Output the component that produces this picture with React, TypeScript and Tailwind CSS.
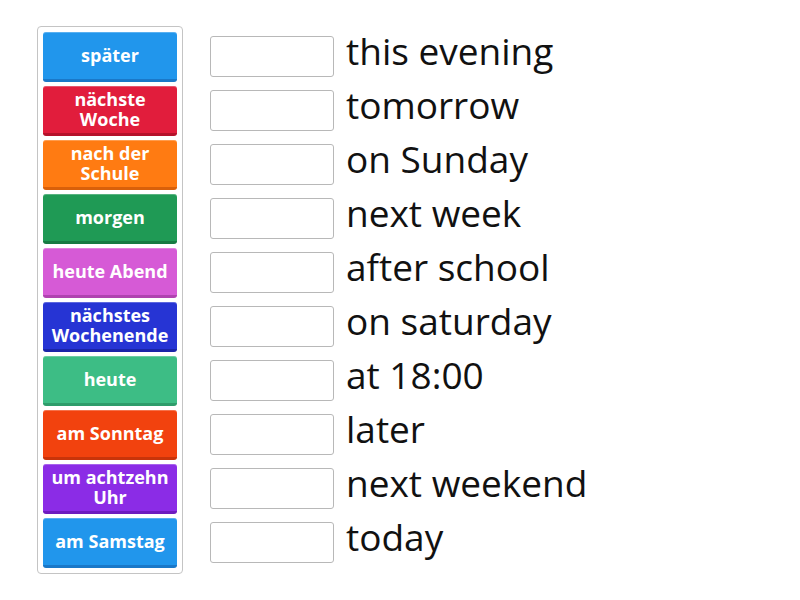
const tiles = [
  { label: "später", bg: "bg-[#2196ec]", edge: "border-[#1a78c8]" },
  { label: "nächste Woche", bg: "bg-[#e11d3c]", edge: "border-[#b5122b]" },
  { label: "nach der Schule", bg: "bg-[#ff7b12]", edge: "border-[#d9600a]" },
  { label: "morgen", bg: "bg-[#1f9a55]", edge: "border-[#177a42]" },
  { label: "heute Abend", bg: "bg-[#d65ad6]", edge: "border-[#b042b0]" },
  { label: "nächstes Wochenende", bg: "bg-[#2634d4]", edge: "border-[#1a24a8]" },
  { label: "heute", bg: "bg-[#3dbd85]", edge: "border-[#2e9c6a]" },
  { label: "am Sonntag", bg: "bg-[#f2420e]", edge: "border-[#c9340a]" },
  { label: "um achtzehn Uhr", bg: "bg-[#8b2ce6]", edge: "border-[#6d1bbf]" },
  { label: "am Samstag", bg: "bg-[#2196ec]", edge: "border-[#1a78c8]" },
];

const targets = [
  "this evening",
  "tomorrow",
  "on Sunday",
  "next week",
  "after school",
  "on saturday",
  "at 18:00",
  "later",
  "next weekend",
  "today",
];

export default function App() {
  return (
    <div
      className="w-[800px] h-[600px] bg-white flex items-start pt-[26px] pl-[37px]"
      style={{ fontFamily: '"Open Sans", sans-serif' }}
    >
      {/* Draggable word bank */}
      <div className="w-[146px] border border-[#c4c4c4] rounded-[4px] p-[5px] flex flex-col gap-[4px]">
        {tiles.map((t) => (
          <div
            key={t.label}
            className={`${t.bg} ${t.edge} h-[50px] rounded-[3px] border-b-[3px] flex items-center justify-center text-center text-white font-bold text-[18px] leading-[20px] px-[4px] pb-[1px] shadow-[inset_0_1px_0_rgba(255,255,255,0.25)]`}
          >
            {t.label}
          </div>
        ))}
      </div>

      {/* Drop targets */}
      <div className="ml-[27px] pt-[10px] flex flex-col gap-[13px]">
        {targets.map((label) => (
          <div key={label} className="flex items-center h-[41px]">
            <div className="w-[124px] h-[41px] border border-[#b8b8b8] rounded-[3px] bg-white" />
            <span className="ml-[12px] text-[37px] leading-none text-[#111] -mt-[12px]">{label}</span>
          </div>
        ))}
      </div>
    </div>
  );
}
